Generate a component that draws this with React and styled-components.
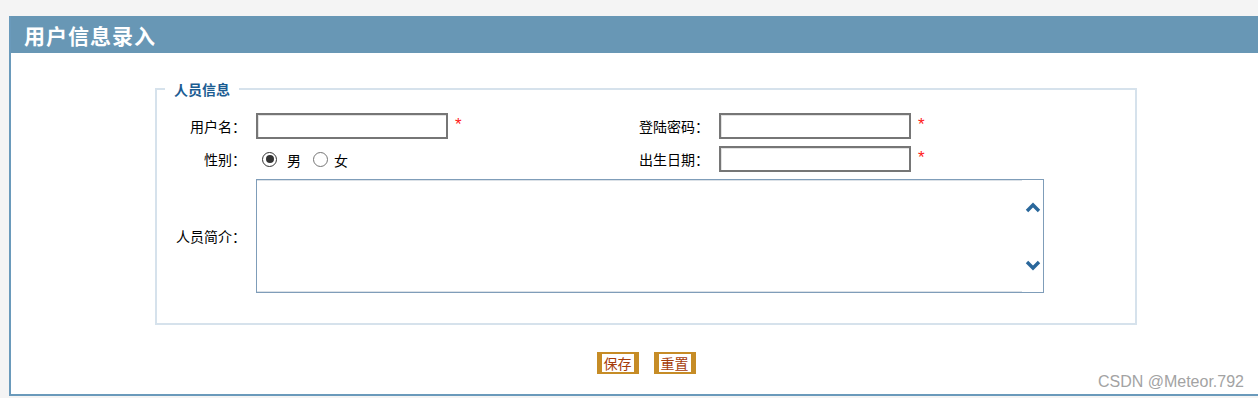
import React from "react";
import styled, { createGlobalStyle } from "styled-components";

const GlobalStyle = createGlobalStyle`
  html, body {
    margin: 0;
    padding: 0;
    background: #f4f4f4;
    overflow: hidden;
  }
  body {
    font-family: "Noto Sans CJK SC", "Liberation Sans", sans-serif;
    font-size: 14px;
    color: #000;
  }
`;

const Page = styled.div`
  position: relative;
  width: 1258px;
  height: 398px;
  padding-top: 16px;
  padding-left: 9px;
  box-sizing: border-box;
`;

const Panel = styled.div`
  width: 1270px;
  background: #fff;
  border-left: 2px solid #6a9abb;
  border-bottom: 2px solid #6a9abb;
  box-sizing: border-box;
`;

const Header = styled.div`
  height: 37px;
  background: #6897b5;
  display: flex;
  align-items: center;
  padding-left: 13px;
`;

const Title = styled.h1`
  margin: 0;
  color: #fff;
  font-size: 21px;
  font-weight: bold;
  letter-spacing: 1px;
`;

const Body = styled.div`
  padding: 28px 0 20px 144px;
`;

const Content = styled.div`
  width: 982px;
`;

const Fieldset = styled.fieldset`
  margin: 0;
  padding: 14px 0 30px 0;
  border: 2px solid #d6e2ec;
  box-sizing: border-box;
  width: 982px;
  min-width: 0;
`;

const Legend = styled.legend`
  margin-left: 8px;
  padding: 0 9px;
  font-size: 14px;
  line-height: 16px;
  font-weight: bold;
  color: #1b5c92;
`;

const FormGrid = styled.div`
  display: grid;
  grid-template-columns: 89px 343px 100px 1fr;
  column-gap: 10px;
  row-gap: 7px;
  align-items: center;
  margin-top: 2px;
`;

const Label = styled.label`
  text-align: right;
  font-size: 14px;
  line-height: 20px;
  white-space: nowrap;
`;

const Field = styled.div`
  display: flex;
  align-items: center;
  height: ${(p) => (p.$tall ? "auto" : "26px")};
  grid-column: ${(p) => (p.$span ? "2 / 5" : "auto")};
`;

const TextInput = styled.input`
  width: 192px;
  height: 26px;
  box-sizing: border-box;
  border: 2px solid #767676;
  box-shadow: inset 1px 1px 0 #e2e2e2;
  background: #fff;
  padding: 0 4px;
  outline: none;
`;

const Required = styled.span`
  color: #ff1a1a;
  font-size: 17px;
  margin-left: 7px;
  position: relative;
  top: -1px;
  font-family: "Liberation Sans", sans-serif;
`;

const RadioGroup = styled.div`
  display: flex;
  align-items: center;
  padding-left: 6px;
`;

const RadioLabel = styled.label`
  display: flex;
  align-items: center;
  margin-right: ${(p) => (p.$last ? "0" : "12px")};
  font-size: 14px;
  line-height: 20px;
  padding-top: 2px;
`;

const Radio = styled.input.attrs({ type: "radio" })`
  appearance: none;
  margin: 0 ${(p) => (p.$wide ? "10px" : "6px")} 0 0;
  width: 15px;
  height: 15px;
  border-radius: 50%;
  border: 1px solid ${(p) => (p.defaultChecked ? "#333" : "#767676")};
  box-sizing: border-box;
  background: #fff;
  display: grid;
  place-items: center;
  position: relative;
  top: -1px;

  &:checked::after {
    content: "";
    width: 8px;
    height: 8px;
    border-radius: 50%;
    background: #333;
  }
`;

const TextBox = styled.div`
  display: flex;
  width: 788px;
  height: 114px;
  border: 1px solid #7f9db9;
  box-sizing: border-box;
`;

const TextArea = styled.textarea`
  flex: 1;
  border: none;
  resize: none;
  outline: none;
  box-shadow: inset 0 1px 0 #dbe1e7, inset 0 -1px 0 #dbe1e7;
  font-family: inherit;
  font-size: 14px;
`;

const ScrollCol = styled.div`
  width: 21px;
  display: flex;
  flex-direction: column;
  justify-content: space-between;
  align-items: center;
  padding: 22px 0 21px;
`;

const Actions = styled.div`
  display: flex;
  justify-content: center;
  gap: 15px;
  margin-top: 27px;
`;

const Button = styled.button`
  height: 22px;
  padding: 0 2px;
  border-style: solid;
  border-width: 2px 5px;
  border-color: #c68c26;
  background: #fff;
  color: #a63c08;
  font-family: "Noto Sans CJK SC", sans-serif;
  font-size: 14px;
  line-height: 18px;
  cursor: pointer;
`;

const Watermark = styled.div`
  position: absolute;
  right: 14px;
  top: 373px;
  font-family: "Liberation Sans", sans-serif;
  font-size: 16px;
  color: #a3a3a3;
`;

const Chevron = ({ down }) => (
  <svg width="16" height="12" viewBox="0 0 16 12">
    <polyline
      points={down ? "2,3 8,9 14,3" : "2,9 8,3 14,9"}
      fill="none"
      stroke="#2a679b"
      strokeWidth="3.4"
    />
  </svg>
);

const App = () => {
  return (
    <>
      <GlobalStyle />
      <Page>
        <Panel>
          <Header>
            <Title>用户信息录入</Title>
          </Header>
          <Body>
            <Content>
              <Fieldset>
                <Legend>人员信息</Legend>
                <FormGrid>
                  <Label>用户名：</Label>
                  <Field>
                    <TextInput type="text" />
                    <Required>*</Required>
                  </Field>
                  <Label>登陆密码：</Label>
                  <Field>
                    <TextInput type="password" />
                    <Required>*</Required>
                  </Field>

                  <Label>性别：</Label>
                  <Field>
                    <RadioGroup>
                      <RadioLabel>
                        <Radio name="sex" $wide defaultChecked />男
                      </RadioLabel>
                      <RadioLabel $last>
                        <Radio name="sex" />女
                      </RadioLabel>
                    </RadioGroup>
                  </Field>
                  <Label>出生日期：</Label>
                  <Field>
                    <TextInput type="text" />
                    <Required>*</Required>
                  </Field>

                  <Label>人员简介：</Label>
                  <Field $span $tall>
                    <TextBox>
                      <TextArea />
                      <ScrollCol>
                        <Chevron />
                        <Chevron down />
                      </ScrollCol>
                    </TextBox>
                  </Field>
                </FormGrid>
              </Fieldset>
              <Actions>
                <Button>保存</Button>
                <Button>重置</Button>
              </Actions>
            </Content>
          </Body>
        </Panel>
        <Watermark>CSDN @Meteor.792</Watermark>
      </Page>
    </>
  );
};

export default App;
